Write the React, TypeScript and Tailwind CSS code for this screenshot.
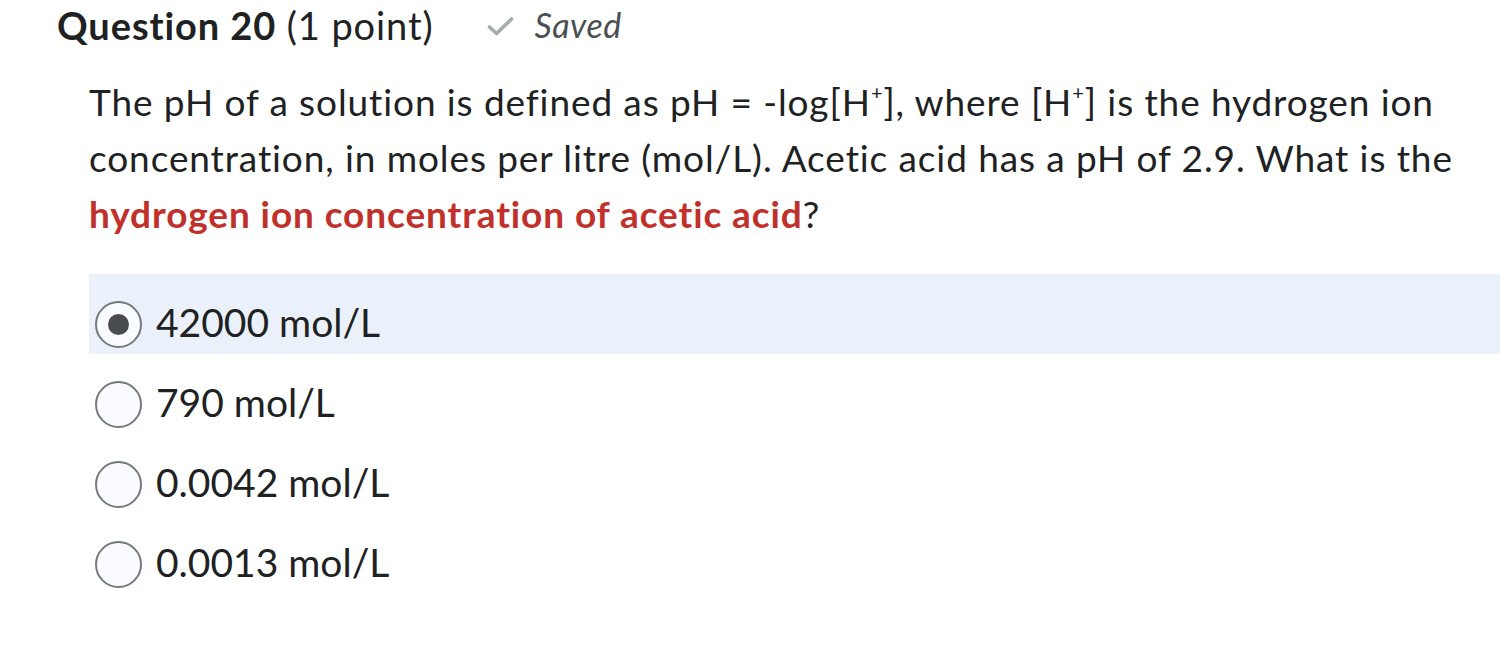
import React from "react";

const options = [
  { label: "42000 mol/L", selected: true },
  { label: "790 mol/L", selected: false },
  { label: "0.0042 mol/L", selected: false },
  { label: "0.0013 mol/L", selected: false },
];

export default function App() {
  return (
    <div className="w-[1500px] h-[648px] bg-white overflow-hidden text-[#202122]" style={{ fontFamily: "Lato, 'Open Sans', sans-serif" }}>
      <div className="pl-[57px] pt-[4px] flex items-center h-[46px]">
        <h2 className="text-[38px] leading-none tracking-[0.9px]">
          <span className="font-bold">Question 20</span> <span className="font-normal">(1 point)</span>
        </h2>
        <div className="ml-[54px] flex items-center gap-[20px] text-[#4a4f52]">
          <svg width="27" height="19" viewBox="0 0 27 19" fill="none" className="mt-[2px]">
            <path d="M2.5 10 L9.5 16.5 L24.5 2" stroke="#a5abad" strokeWidth="3.6" strokeLinecap="round" strokeLinejoin="round" />
          </svg>
          <span className="italic text-[34px] leading-none tracking-[0.5px]">Saved</span>
        </div>
      </div>
      <div className="pl-[89px] pt-[28px] w-[1480px] text-[37px] leading-[56px] tracking-[0.9px]">
        The pH of a solution is defined as pH = -log[H<sup className="text-[20px] top-[-0.8em]">+</sup>], where [H<sup className="text-[20px] top-[-0.8em]">+</sup>] is the hydrogen ion concentration, in moles per litre (mol/L). Acetic acid has a pH of 2.9. What is the{" "}
        <strong className="font-bold text-[#c1312b]">hydrogen ion concentration of acetic acid</strong>?
      </div>
      <div className="ml-[89px] mt-[32px] flex flex-col">
        {options.map((o) => (
          <div key={o.label} className={`h-[80px] flex items-start pl-[6px] pt-[27px] ${o.selected ? "bg-[#eaf1fb]" : ""}`}>
            <div className="w-[47px] h-[47px] rounded-full border-2 border-[#74797d] bg-[#f9fbff] flex items-center justify-center shrink-0">
              {o.selected && <div className="w-[21px] h-[21px] rounded-full bg-[#494c4e]" />}
            </div>
            <span className="ml-[14px] mt-[2px] text-[39px] leading-[39px]">{o.label}</span>
          </div>
        ))}
      </div>
    </div>
  );
}
